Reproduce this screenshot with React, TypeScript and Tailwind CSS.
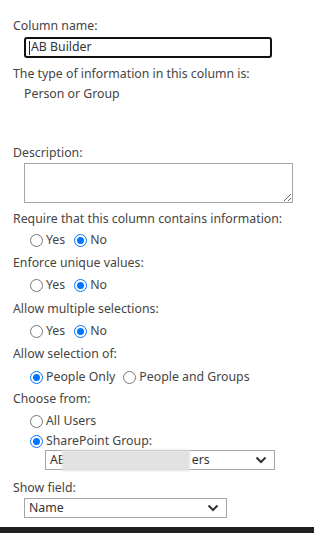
import React from 'react';

const font = { fontFamily: '"Noto Sans", "Open Sans", Arial, sans-serif' };

const Radio = ({ checked }: { checked?: boolean }) => (
  <span
    className={`inline-flex items-center justify-center w-[13px] h-[13px] rounded-full border ${
      checked ? 'border-[#0075ff]' : 'border-[#767676]'
    } bg-white shrink-0`}
  >
    {checked && <span className="w-[7px] h-[7px] rounded-full bg-[#0075ff]" />}
  </span>
);

const Option = ({ label, checked }: { label: string; checked?: boolean }) => (
  <span className="inline-flex items-center gap-[3px]">
    <Radio checked={checked} />
    <span>{label}</span>
  </span>
);

const Label = ({ children, className = '' }: { children: React.ReactNode; className?: string }) => (
  <div className={`h-[20px] leading-[20px] ${className}`}>{children}</div>
);

const Chevron = () => (
  <svg width="12" height="8" viewBox="0 0 12 8" className="shrink-0">
    <path d="M1.5 1.5 L6 6 L10.5 1.5" fill="none" stroke="#333" strokeWidth="2" />
  </svg>
);

export default function App() {
  return (
    <div className="w-[314px] h-[533px] bg-white flex flex-col overflow-hidden text-[12.3px] text-[#444]" style={font}>
      <div className="flex-1 pl-[13px] pt-[16px]">
        <Label>Column name:</Label>
        <div className="ml-[11px] mt-[1px] w-[248px] h-[21px] border-2 border-[#111] rounded-[3px] flex items-center pl-[3px] text-[#333]">
          <span className="w-px h-[14px] bg-[#222] mr-[1px]" />
          AB Builder
        </div>
        <Label className="mt-[6px]">The type of information in this column is:</Label>
        <Label className="pl-[11px]">Person or Group</Label>

        <Label className="mt-[39px]">Description:</Label>
        <textarea className="block ml-[11px] w-[269px] h-[40px] border border-[#a6a6a6] outline-none" />

        <Label className="mt-[6px]">Require that this column contains information:</Label>
        <div className="h-[20px] mt-[1px] flex items-center gap-[9px] pl-[17px]">
          <Option label="Yes" />
          <Option label="No" checked />
        </div>

        <Label className="mt-[3px]">Enforce unique values:</Label>
        <div className="h-[20px] mt-[2px] flex items-center gap-[9px] pl-[17px]">
          <Option label="Yes" />
          <Option label="No" checked />
        </div>

        <Label className="mt-[4px]">Allow multiple selections:</Label>
        <div className="h-[20px] mt-[2px] flex items-center gap-[9px] pl-[17px]">
          <Option label="Yes" />
          <Option label="No" checked />
        </div>

        <Label className="mt-[3px]">Allow selection of:</Label>
        <div className="h-[20px] mt-[3px] flex items-center gap-[8px] pl-[17px]">
          <Option label="People Only" checked />
          <Option label="People and Groups" />
        </div>

        <Label className="mt-[2px]">Choose from:</Label>
        <div className="h-[20px] mt-[2px] flex items-center pl-[17px]">
          <Option label="All Users" />
        </div>
        <div className="h-[20px] flex items-center pl-[17px]">
          <Option label="SharePoint Group:" checked />
        </div>
        <div className="ml-[32px] mt-[-1px] w-[230px] h-[20px] border border-[#a6a6a6] flex items-center pl-[4px] pr-[7px] text-[#333]">
          <span className="whitespace-nowrap">AB</span>
          <span className="ml-[-4px] w-[128px] h-[21px] bg-[#e2e2e2] blur-[1px] shrink-0" />
          <span className="flex-1 ml-[2px]">ers</span>
          <Chevron />
        </div>

        <Label className="mt-[8px]">Show field:</Label>
        <div className="ml-[11px] w-[203px] h-[20px] border border-[#a6a6a6] flex items-center justify-between pl-[4px] pr-[7px] text-[#333]">
          <span>Name</span>
          <Chevron />
        </div>
      </div>
      <div className="h-[6px] bg-[#1f1f1f]" />
    </div>
  );
}
